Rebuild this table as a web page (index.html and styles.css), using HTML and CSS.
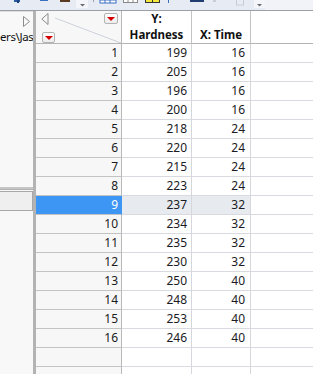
FILE: index.html
```html
<!DOCTYPE html>
<html>
<head>
<meta charset="utf-8">
<link rel="stylesheet" href="styles.css">
</head>
<body>
<div class="app">
  <div class="toolbar">
    <svg class="tb-svg" width="313" height="10" viewBox="0 0 313 10">
      <rect x="265" y="0" width="48" height="10" fill="#f1f3f8"/>
      <rect x="14" y="0" width="6" height="2" fill="#2b5ca6"/>
      <rect x="17" y="0" width="2" height="3" fill="#1b3f7a"/>
      <rect x="40" y="0" width="8" height="1" fill="#3b6fc2"/>
      <rect x="60" y="0" width="10" height="2" fill="#5a3b22"/>
      <rect x="76" y="0" width="12" height="8" fill="#f3f5fa"/>
      <path d="M80 4 L85 4 L82.5 6.5 Z" fill="#6b6b6b"/>
      <rect x="93" y="0" width="1" height="2" fill="#9aa0ad"/>
      <rect x="100" y="0" width="16" height="3" fill="#ffffff" stroke="#3b6fc2" stroke-width="1"/>
      <line x1="105" y1="0" x2="105" y2="3" stroke="#3b6fc2"/>
      <line x1="110" y1="0" x2="110" y2="3" stroke="#3b6fc2"/>
      <rect x="123.5" y="-1" width="14" height="3.5" fill="#ffffff" stroke="#8a8a8a" stroke-width="1"/>
      <line x1="128" y1="0" x2="128" y2="3" stroke="#8a8a8a"/>
      <line x1="133" y1="0" x2="133" y2="3" stroke="#8a8a8a"/>
      <rect x="145.5" y="-1" width="14" height="3.5" fill="#f4e83a" stroke="#333" stroke-width="1"/>
      <line x1="152.5" y1="0" x2="152.5" y2="3" stroke="#333"/>
      <rect x="168" y="0" width="1" height="3" fill="#3b6fc2"/>
      <rect x="190" y="0" width="14" height="2" fill="#1f3d70"/>
      <rect x="213" y="0" width="3" height="2" fill="#c8ccd6"/>
      <rect x="236.5" y="-1" width="7" height="6" fill="none" stroke="#c9ccd4" stroke-width="1"/>
      <rect x="254" y="0" width="11" height="8" fill="#f3f5fa"/>
      <path d="M257 4 L262 4 L259.5 6.5 Z" fill="#6b6b6b"/>
    </svg>
  </div>
  <div class="main">
    <div class="left">
      <div class="lp-head">
        <svg width="7" height="11" viewBox="0 0 7 11"><path d="M0.5 0.5 L6.5 5.5 L0.5 10.5 Z" fill="none" stroke="#8c8c8c" stroke-width="1"/></svg>
      </div>
      <div class="lp-path">ers\Jas</div>
      <div class="lp-fill"></div>
      <div class="lp-sep"></div>
      <div class="lp-box"></div>
      <div class="lp-rest"></div>
    </div>
    <div class="splitter"></div>
    <div class="grid">
      <div class="row hdr">
        <div class="cell rn corner">
          <svg class="diag" width="85" height="32" viewBox="0 0 85 32"><line x1="19" y1="7" x2="85" y2="32" stroke="#cdd0dc" stroke-width="1"/></svg>
          <svg class="back-tri" width="8" height="12" viewBox="0 0 8 12"><path d="M7 0.5 L0.8 6 L7 11.5 Z" fill="none" stroke="#8c8c8c" stroke-width="1"/></svg>
          <span class="rbtn rbtn-top"><span class="rtri"></span></span>
          <span class="rbtn rbtn-bot"><span class="rtri"></span></span>
        </div>
        <div class="cell hd c-h"><span>Y:</span><span>Hardness</span></div>
        <div class="cell hd c-t"><span>X: Time</span></div>
        <div class="cell c-e"></div>
      </div>
      <div class="row"><div class="cell rn">1</div><div class="cell c-h">199</div><div class="cell c-t">16</div><div class="cell c-e"></div></div>
      <div class="row"><div class="cell rn">2</div><div class="cell c-h">205</div><div class="cell c-t">16</div><div class="cell c-e"></div></div>
      <div class="row"><div class="cell rn">3</div><div class="cell c-h">196</div><div class="cell c-t">16</div><div class="cell c-e"></div></div>
      <div class="row"><div class="cell rn">4</div><div class="cell c-h">200</div><div class="cell c-t">16</div><div class="cell c-e"></div></div>
      <div class="row"><div class="cell rn">5</div><div class="cell c-h">218</div><div class="cell c-t">24</div><div class="cell c-e"></div></div>
      <div class="row"><div class="cell rn">6</div><div class="cell c-h">220</div><div class="cell c-t">24</div><div class="cell c-e"></div></div>
      <div class="row"><div class="cell rn">7</div><div class="cell c-h">215</div><div class="cell c-t">24</div><div class="cell c-e"></div></div>
      <div class="row"><div class="cell rn">8</div><div class="cell c-h">223</div><div class="cell c-t">24</div><div class="cell c-e"></div></div>
      <div class="row sel"><div class="cell rn">9</div><div class="cell c-h">237</div><div class="cell c-t">32</div><div class="cell c-e"></div></div>
      <div class="row"><div class="cell rn">10</div><div class="cell c-h">234</div><div class="cell c-t">32</div><div class="cell c-e"></div></div>
      <div class="row"><div class="cell rn">11</div><div class="cell c-h">235</div><div class="cell c-t">32</div><div class="cell c-e"></div></div>
      <div class="row"><div class="cell rn">12</div><div class="cell c-h">230</div><div class="cell c-t">32</div><div class="cell c-e"></div></div>
      <div class="row"><div class="cell rn">13</div><div class="cell c-h">250</div><div class="cell c-t">40</div><div class="cell c-e"></div></div>
      <div class="row"><div class="cell rn">14</div><div class="cell c-h">248</div><div class="cell c-t">40</div><div class="cell c-e"></div></div>
      <div class="row"><div class="cell rn">15</div><div class="cell c-h">253</div><div class="cell c-t">40</div><div class="cell c-e"></div></div>
      <div class="row"><div class="cell rn">16</div><div class="cell c-h">246</div><div class="cell c-t">40</div><div class="cell c-e"></div></div>
      <div class="row"><div class="cell rn"></div><div class="cell c-h"></div><div class="cell c-t"></div><div class="cell c-e"></div></div>
      <div class="row"><div class="cell rn"></div><div class="cell c-h"></div><div class="cell c-t"></div><div class="cell c-e"></div></div>
    </div>
  </div>
</div>
</body>
</html>
```
FILE: styles.css
```css
* { box-sizing: border-box; }
html, body { margin: 0; padding: 0; }
body {
  width: 313px;
  height: 374px;
  overflow: hidden;
  background: #ffffff;
  font-family: "Noto Sans", "Open Sans", sans-serif;
  font-size: 12px;
  color: #1b1b24;
}
.app { width: 313px; height: 374px; display: flex; flex-direction: column; overflow: hidden; }
.toolbar {
  height: 11px;
  flex: none;
  background: #e7ebf4;
  border-bottom: 1px solid #9c9fa6;
}
.tb-svg { display: block; }
.main { flex: 1; display: flex; min-height: 0; }
.left {
  width: 33px;
  flex: none;
  display: flex;
  flex-direction: column;
  background: #f8f8f8;
  overflow: hidden;
}
.lp-head {
  height: 18px;
  flex: none;
  display: flex;
  justify-content: flex-end;
  align-items: flex-start;
  padding: 4px 3px 0 0;
  border-top: 1px solid #dedede;
}
.lp-head svg { display: block; }
.lp-path {
  height: 15px;
  flex: none;
  line-height: 15px;
  white-space: nowrap;
  overflow: hidden;
  color: #111;
  font-size: 11.5px;
  letter-spacing: -0.4px;
}
.lp-fill { height: 143px; flex: none; }
.lp-sep { flex: none; background: #c6c6c6; border-bottom: 1px solid #b2b2b2; margin-bottom: 1px; height: 3px; }
.lp-box {
  height: 20px;
  flex: none;
  background: #efefef;
  border: 1px solid #a8a8a8;
  border-left: none;
}
.lp-rest { flex: 1; }
.splitter { width: 3px; flex: none; background: #b3b3b3; }
.grid { flex: 1; display: flex; flex-direction: column; overflow: hidden; }
.row { display: flex; height: 19px; flex: none; }
.cell {
  height: 100%;
  line-height: 18px;
  text-align: right;
  white-space: nowrap;
  border-bottom: 1px solid #d9d9e0;
  border-right: 1px solid #d6d6dd;
}
.rn {
  width: 86px;
  background: #f7f7f7;
  border-right: 1px solid #b9b9b9;
  border-bottom: 1px solid #c3c3c3;
  padding-right: 3px;
  color: #1c1c1c;
}
.c-h { width: 70px; padding-right: 4px; }
.c-t { width: 59px; padding-right: 5px; }
.c-e { flex: 1; border-right: none; }
.hdr { height: 33px; }
.hdr .cell { border-bottom: 1px solid #b4b4b4; }
.hdr .c-h, .hdr .c-t { border-right: 1px solid #c3c3c3; }
.hd {
  display: flex;
  flex-direction: column;
  justify-content: flex-end;
  align-items: center;
  padding: 0;
  font-weight: 700;
  font-size: 11.5px;
  line-height: 16px;
  color: #111;
}
.corner { position: relative; }
.diag { position: absolute; left: 0; top: 0; }
.back-tri { position: absolute; left: 5px; top: 2px; }
.rbtn {
  position: absolute;
  width: 14px;
  height: 11px;
  border: 1px solid #b3b3b3;
  border-radius: 2px;
  background: linear-gradient(#ffffff, #ececec);
  display: flex;
  align-items: center;
  justify-content: center;
}
.rbtn-top { left: 68px; top: 2px; }
.rbtn-bot { left: 6px; top: 21px; width: 13px; }
.rtri {
  width: 0;
  height: 0;
  border-left: 4px solid transparent;
  border-right: 4px solid transparent;
  border-top: 4px solid #d40000;
  margin-top: 1px;
}
.sel .rn { background: #3d95f4; color: #ffffff; border-right-color: #3d95f4; }
.sel .c-h, .sel .c-t { background: #e7eaee; }
```
